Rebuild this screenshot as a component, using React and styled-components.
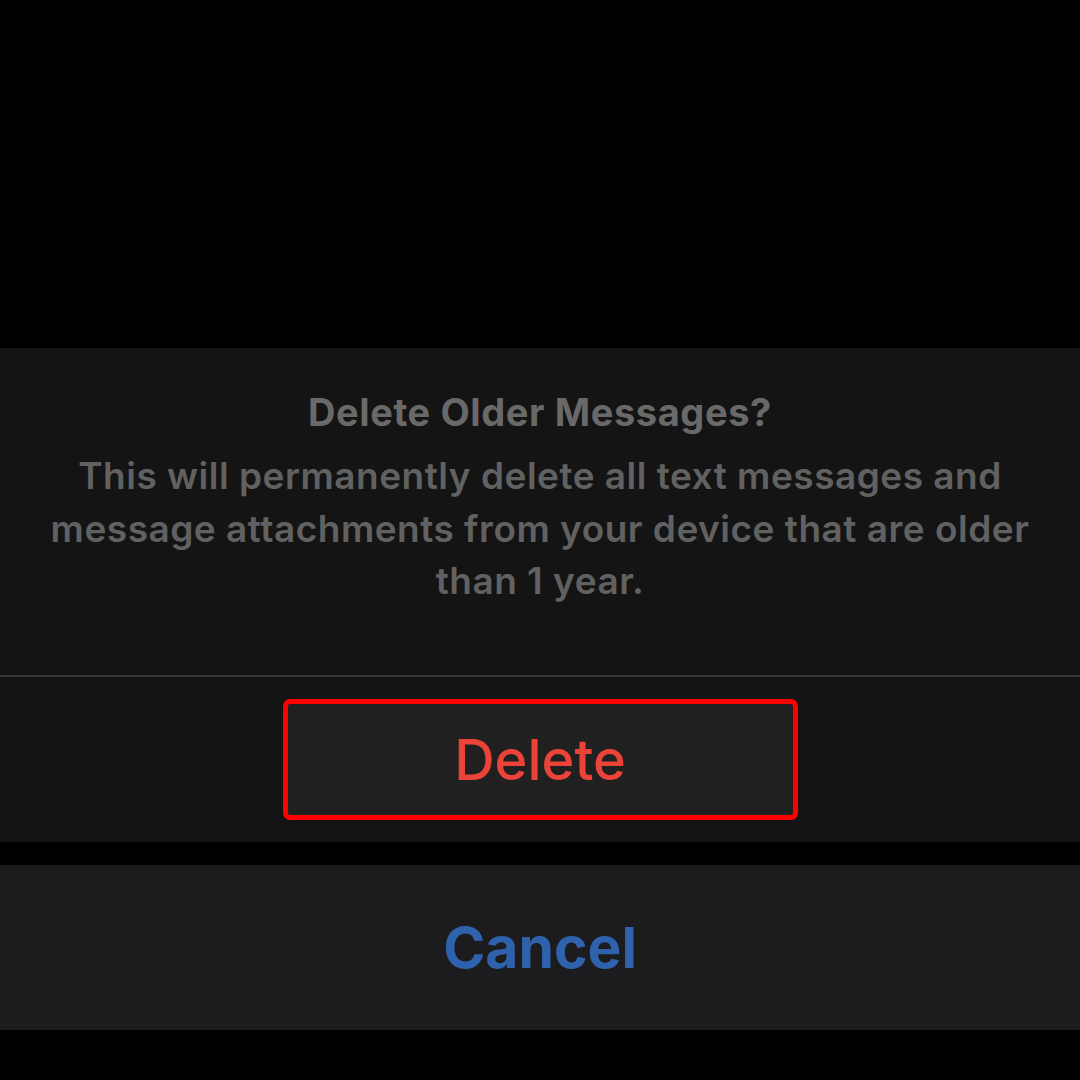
import React from "react";
import styled, { createGlobalStyle } from "styled-components";

const Global = createGlobalStyle`
  html, body { margin: 0; padding: 0; background: #000; }
  body { font-family: Inter, "Noto Sans", sans-serif; }
  #root { width: 1080px; height: 1080px; }
`;

const Screen = styled.div`
  width: 1080px;
  height: 1080px;
  background: #000;
  display: flex;
  flex-direction: column;
  padding-top: 348px;
  box-sizing: border-box;
`;

const Sheet = styled.div`
  background: #141414;
  display: flex;
  flex-direction: column;
`;

const Header = styled.div`
  height: 329px;
  box-sizing: border-box;
  padding-top: 42px;
  border-bottom: 2px solid #363636;
  display: flex;
  flex-direction: column;
  align-items: center;
  text-align: center;
`;

const Title = styled.div`
  font-size: 38px;
  font-weight: 700;
  color: #696969;
  line-height: 44px;
  letter-spacing: 0.6px;
`;

const Message = styled.div`
  margin-top: 16px;
  font-size: 37px;
  font-weight: 600;
  color: #616161;
  line-height: 52.5px;
  letter-spacing: 0.5px;
  max-width: 1060px;
`;

const Row = styled.div`
  height: 165px;
  display: flex;
  align-items: center;
  justify-content: center;
  background: ${(p) => p.$bg};
`;

const Highlight = styled.div`
  width: 515px;
  height: 121px;
  box-sizing: border-box;
  border: 5px solid #ff0000;
  border-radius: 7px;
  background: #202020;
  display: flex;
  align-items: center;
  justify-content: center;
`;

const ActionLabel = styled.span`
  font-size: ${(p) => p.$size};
  font-weight: ${(p) => p.$weight};
  color: ${(p) => p.$color};
`;

const Gap = styled.div`
  height: 23px;
`;

const CancelSheet = styled.div`
  background: #1c1c1e;
`;

export default function App() {
  return (
    <>
      <Global />
      <Screen>
        <Sheet>
          <Header>
            <Title>Delete Older Messages?</Title>
            <Message>
              This will permanently delete all text messages and
              <br />
              message attachments from your device that are older
              <br />
              than 1 year.
            </Message>
          </Header>
          <Row $bg="#141414">
            <Highlight>
              <ActionLabel $size="56px" $weight={500} $color="#eb4338">
                Delete
              </ActionLabel>
            </Highlight>
          </Row>
        </Sheet>
        <Gap />
        <CancelSheet>
          <Row $bg="#1c1c1e">
            <ActionLabel $size="57px" $weight={700} $color="#2f62ad">
              Cancel
            </ActionLabel>
          </Row>
        </CancelSheet>
      </Screen>
    </>
  );
}
